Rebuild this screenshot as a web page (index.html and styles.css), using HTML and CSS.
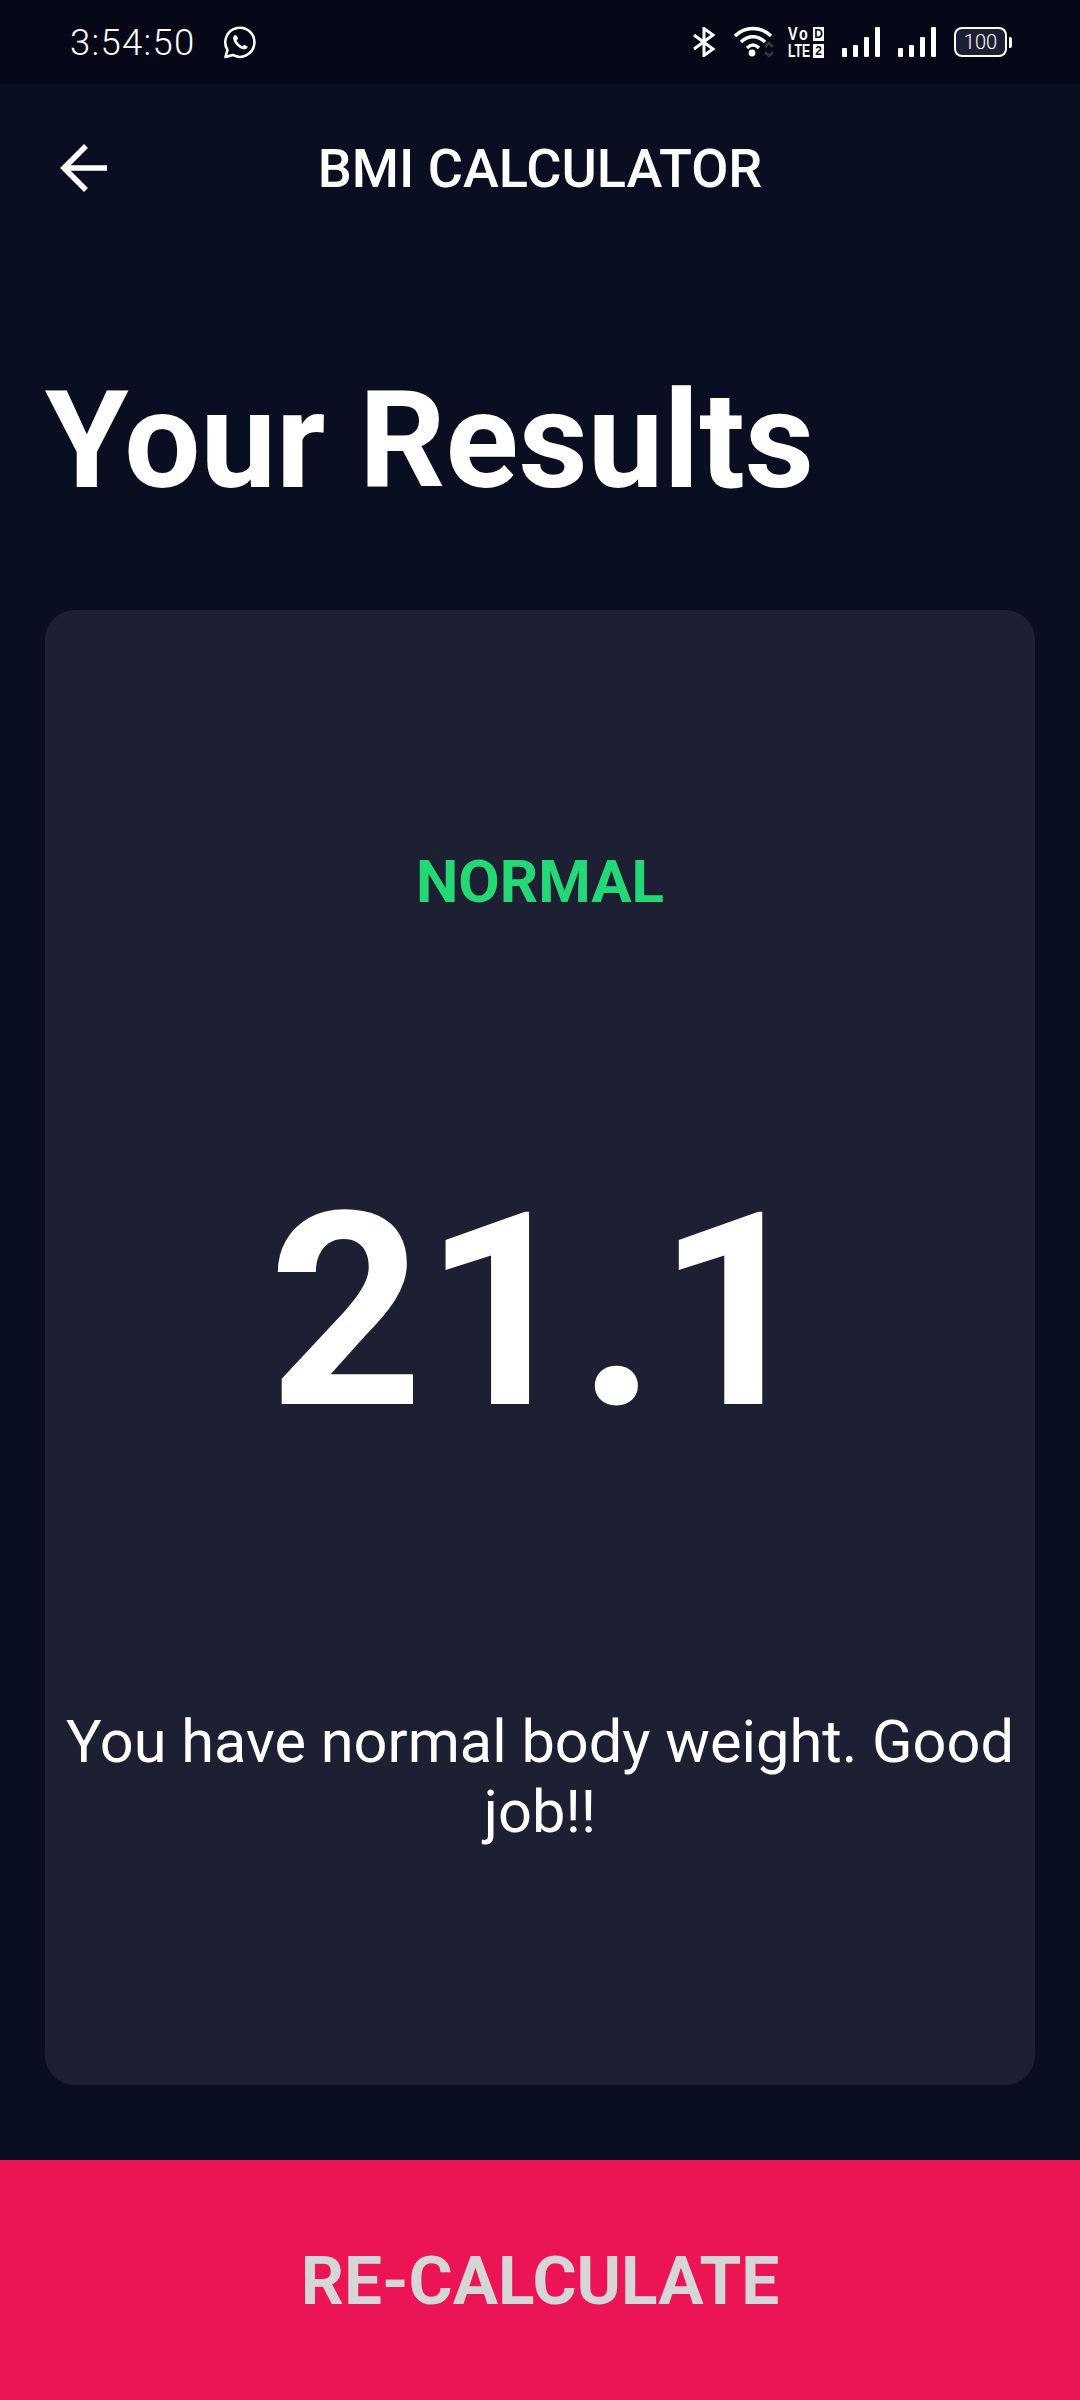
FILE: index.html
```html
<!DOCTYPE html>
<html lang="en">
<head>
    <meta charset="UTF-8">
    <meta name="viewport" content="width=device-width, initial-scale=1.0">
    <title>BMI Calculator</title>
    <link rel="stylesheet" href="styles.css">
</head>
<body>
    <div class="status-bar">
        <div class="status-left">
            <span class="clock">3:54:50</span>
            <svg class="icon-whatsapp" viewBox="0 0 34 34" width="33" height="33" fill="none" stroke="#fff">
                <path d="M2.5 32 L4.6 24.6 A15 15 0 1 1 10 29.8 Z" stroke-width="2.6" stroke-linejoin="round"/>
                <path d="M11.8 9.6 C10 11 10 13.4 11.6 16.4 C13.6 20 17.4 23.6 21.6 24 C23.6 24.2 25.4 22.8 25.4 21 L21.8 19.2 L20 21 C17.6 20 15 17.4 14 15 L15.6 13 L13.8 9.6 Z" fill="#fff" stroke="none"/>
            </svg>
        </div>
        <div class="status-right">
            <svg viewBox="0 0 24 30" width="24" height="30" fill="none" stroke="#fff" stroke-width="3">
                <path d="M2 8 L21 22 L12 28.5 L12 1.5 L21 8 L2 22"/>
            </svg>
            <svg class="icon-wifi" viewBox="0 0 40 32" width="40" height="32">
                <path d="M1 10 C11 0 27 0 37 10" fill="none" stroke="#fff" stroke-width="3.4"/>
                <path d="M7 16 C14 9 24 9 31 16" fill="none" stroke="#fff" stroke-width="3.4"/>
                <path d="M13 22 C17 18 21 18 25 22" fill="none" stroke="#fff" stroke-width="3.4"/>
                <circle cx="18" cy="27" r="3.4" fill="#fff"/>
                <path d="M31 21 L35 17 L39 21 M31 26 L35 30 L39 26" fill="none" stroke="#33353f" stroke-width="2.6"/>
            </svg>
            <div class="volte">
                <div class="volte-row"><span class="vo">Vo</span><span class="sim">D</span></div>
                <div class="volte-row"><span class="lte">LTE</span><span class="sim">2</span></div>
            </div>
            <div class="signal"><i class="b1"></i><i class="b2"></i><i class="b3"></i><i class="b4"></i></div>
            <div class="signal"><i class="b1"></i><i class="b2"></i><i class="b3"></i><i class="b4"></i></div>
            <div class="battery">
                <div class="battery-body">100</div>
                <div class="battery-tip"></div>
            </div>
        </div>
    </div>

    <div class="app-bar">
        <svg class="back" viewBox="0 0 48 48" width="48" height="48" fill="none" stroke="#fff" stroke-width="5.5">
            <path d="M47 24 L3 24 M26 2 L4 24 L26 46"/>
        </svg>
        <h2 class="app-title">BMI CALCULATOR</h2>
    </div>

    <h1 class="page-title">Your Results</h1>

    <div class="card">
        <p class="result-label">NORMAL</p>
        <p class="result-value">21.1</p>
        <p class="result-text">You have normal body weight. Good job!!</p>
    </div>

    <div class="bottom-button">RE-CALCULATE</div>
</body>
</html>
```

FILE: styles.css
```css
* {
    box-sizing: border-box;
}

body {
    width: 1080px;
    height: 2400px;
    margin: 0;
    display: flex;
    flex-direction: column;
    overflow: hidden;
    background-color: #0a0e21;
    color: #fff;
    font-family: Roboto, "Liberation Sans", sans-serif;
}

/* status bar */
.status-bar {
    height: 84px;
    padding: 0 68px 0 70px;
    display: flex;
    justify-content: space-between;
    align-items: center;
    background-color: #060817;
}

.status-left {
    display: flex;
    align-items: center;
    gap: 27px;
}

.clock {
    font-size: 36.5px;
    font-weight: 300;
    letter-spacing: 1.3px;
}

.icon-whatsapp {
    display: block;
}

.status-right {
    display: flex;
    align-items: center;
    gap: 18px;
}

.volte {
    width: 36px;
    margin-left: -4px;
    display: flex;
    flex-direction: column;
    gap: 3px;
    font-family: "Liberation Sans", sans-serif;
    font-size: 18px;
    font-weight: 700;
    line-height: 14px;
}

.volte-row {
    height: 14px;
    display: flex;
    justify-content: space-between;
}

.vo,
.lte {
    flex: none;
    width: 24px;
    white-space: nowrap;
    transform-origin: left center;
}

.vo {
    letter-spacing: 3px;
    transform: scaleX(0.8);
}

.lte {
    transform: scaleX(0.68);
}

.sim {
    flex: none;
    width: 11px;
    height: 14px;
    background-color: #fff;
    color: #060817;
    font-size: 12px;
    line-height: 14px;
    text-align: center;
}

.signal {
    display: flex;
    align-items: flex-end;
    gap: 6px;
    height: 30px;
}

.signal i {
    display: block;
    width: 5px;
    border-radius: 1px;
    background-color: #fff;
}

.signal .b1 { height: 9px; }
.signal .b2 { height: 12px; }
.signal .b3 { height: 20px; }
.signal .b4 { height: 30px; }

.battery {
    display: flex;
    align-items: center;
    gap: 2px;
}

.battery-body {
    width: 53px;
    height: 30px;
    border: 2px solid #fff;
    border-radius: 8px;
    background-color: #1d2033;
    font-size: 20px;
    font-weight: 300;
    line-height: 26px;
    text-align: center;
}

.battery-tip {
    width: 3px;
    height: 11px;
    border-radius: 0 2px 2px 0;
    background-color: #fff;
}

/* app bar */
.app-bar {
    height: 168px;
    position: relative;
    display: flex;
    justify-content: center;
    align-items: center;
}

.back {
    position: absolute;
    left: 60px;
    top: 60px;
}

.app-title {
    margin: 0;
    padding-top: 2px;
    font-size: 54px;
    font-weight: 500;
    line-height: 64px;
}

/* content */
.page-title {
    height: 358px;
    margin: 0;
    padding: 101px 45px 0;
    font-size: 135px;
    font-weight: 700;
    line-height: 176px;
}

.card {
    width: 990px;
    height: 1475px;
    margin: 0 45px;
    padding: 0 15px;
    display: flex;
    flex-direction: column;
    align-items: center;
    border-radius: 30px;
    background-color: #1d2033;
}

.card p {
    margin: 0;
    text-align: center;
}

.card .result-label {
    margin-top: 237px;
    color: #24d876;
    font-size: 60px;
    font-weight: 700;
    line-height: 70px;
}

.card .result-value {
    margin-top: 237px;
    font-size: 270px;
    font-weight: 700;
    line-height: 316px;
}

.card .result-text {
    margin-top: 237px;
    font-size: 59.5px;
    line-height: 70px;
}

.bottom-button {
    height: 240px;
    margin-top: 75px;
    display: flex;
    justify-content: center;
    align-items: center;
    background-color: #eb1555;
    color: #d6d6d6;
    font-size: 67.5px;
    font-weight: 700;
}
```
